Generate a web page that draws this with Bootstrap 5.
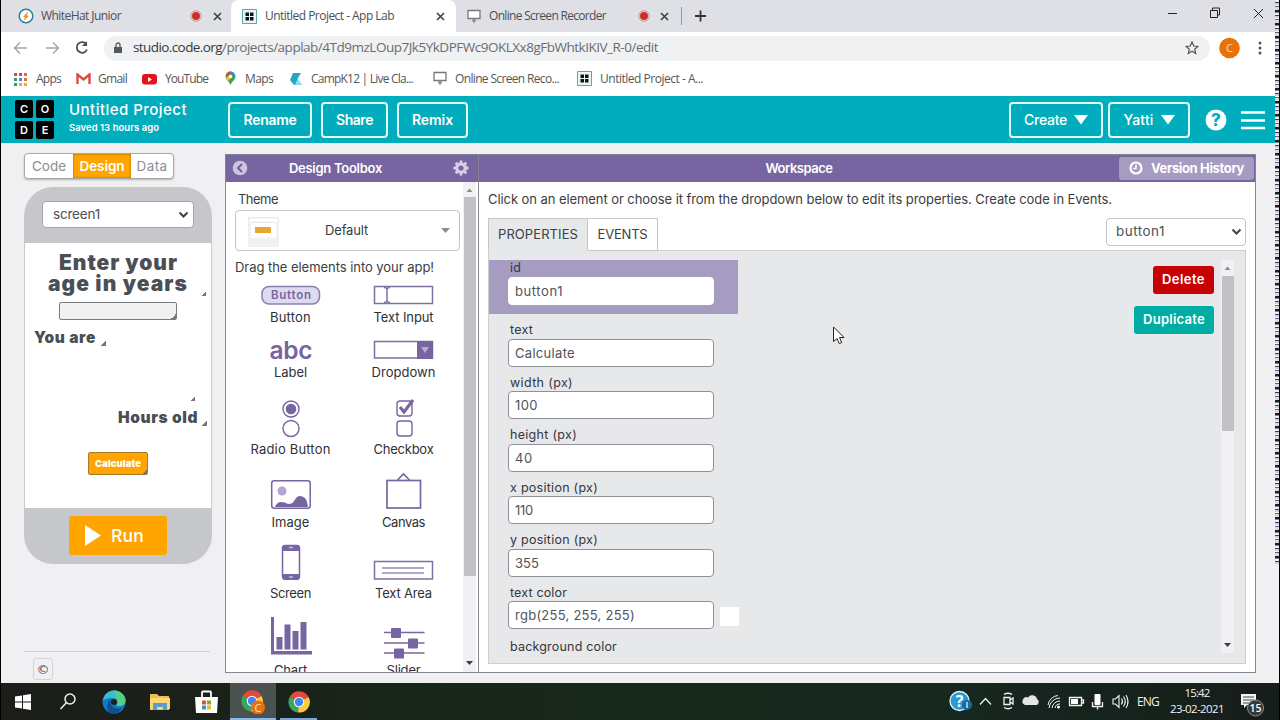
<!DOCTYPE html>
<html lang="en">
<head>
<meta charset="utf-8">
<meta name="viewport" content="width=device-width, initial-scale=1">
<title>Untitled Project - App Lab</title>
<link href="https://cdn.jsdelivr.net/npm/bootstrap@5.3.0/dist/css/bootstrap.min.css" rel="stylesheet">
<style>
:root{--teal:#00adbc;--purple:#7665a0;--lilac:#a69bc1;--orange:#ffa400}
html,body{height:100%}
body{width:1280px;height:720px;overflow:hidden;background:#000;font-family:"Open Sans","Noto Sans",sans-serif;font-size:12px;line-height:1;color:#444}
svg{display:block;flex:none}
[data-w]{display:inline-block;white-space:nowrap}
.screen-area{margin-left:1px;width:1278px;height:720px;background:#f0f0f2;position:relative}
/* browser */
.tabstrip{height:32px;background:#dee0e6;display:flex;align-items:center;color:#4c4f54}
.btab{height:32px;display:grid;align-items:center}
.tab-a{width:230px;grid-template-columns:17px 23px 148px 20px 1fr}
.tab-b{width:225px;background:#fff;border-radius:8px 8px 0 0;grid-template-columns:11px 23px 167px 1fr}
.tab-c{width:225px;grid-template-columns:11px 22px 145px 22px 1fr}
.addr{height:32px;background:#fff;display:grid;grid-template-columns:11px 31px 27px 34px 1106px 1fr;align-items:center}
.omni{height:25px;border-radius:13px;background:#f0f1f2;display:grid;grid-template-columns:9px 20px 1fr 25px;align-items:center;font-size:13.5px;color:#6a6d70}
.omni b{font-weight:400;color:#36383b}
.marks{height:32px;background:#fff;display:grid;grid-template-columns:12px 23px 40px 22px 44px 23px 59px 21px 45px 21px 122px 22px 122px 23px 1fr;align-items:center;padding-bottom:3px;color:#54575b}
/* code.org header */
.top{height:47px;background:var(--teal);color:#fff;font-family:Inter,sans-serif;padding-left:14px}
.logo{display:grid;grid-template-columns:18px 18px;gap:3px}
.logo span{height:18px;width:18px;background:#000;border-radius:2px;font-size:11px;font-weight:600;display:flex;align-items:center;justify-content:center}
.hbtn{height:36px;border:2px solid #e3fcff;border-radius:4px;color:#fff;font-size:14px;font-weight:600;display:flex;align-items:center;justify-content:center;gap:7px;padding:0}
.hbtn:hover{color:#fff}
/* app */
.app{height:540px;font-family:Inter,sans-serif}
.leftcol{width:224px;padding:10px 0 0 23px}
.modes{height:26px;width:150px;border:1px solid #aaa;border-radius:4px;background:#fff;box-shadow:0 1px 2px #0004;font-size:13.5px;color:#8a8d92;overflow:hidden}
.modes>div{display:flex;align-items:center;justify-content:center;height:24px;padding-top:1px}
.modes .on{background:var(--orange);color:#fff;font-weight:600;box-shadow:inset 0 0 2px #7a5200}
.phone{width:188px;height:377px;margin-top:8px;border-radius:29px;background:#c5c7ca;display:flex;flex-direction:column}
.phone-top{height:56px;padding:14px 0 0 18px}
.sel{background:#fff;border:1px solid #a4a6aa;border-radius:4px;display:flex;align-items:center;justify-content:space-between;color:#4d5158}
.canvas{height:265px;background:#fff;border:solid #c9cbcd;border-width:0 1px;position:relative;font-weight:900;color:#4a4f55}
.canvas>*{position:absolute}
.grip{width:5px;height:5px;background:linear-gradient(135deg,transparent 50%,#777 50%)}
.run{width:98px;height:39px;background:var(--orange);border-radius:3px;color:#fff;font-size:17.5px;font-weight:500;display:flex;align-items:center;gap:10px;padding-left:16px}
.frame{width:1031px;height:519px;border:1px solid #85858f;background:#fff;margin-top:11px;display:flex}
.bar{height:27px;background:var(--purple);color:#fff;font-weight:600;font-size:13px;display:flex;align-items:center;padding-bottom:1px}
.tools{width:253px;border-right:1px solid #85858f;overflow:hidden;height:517px}
.txt{font-size:13px;color:#3a3d42}
.theme{width:225px;height:41px;border:1px solid #c3c4c8;border-radius:4px;display:grid;grid-template-columns:12px 77px 1fr 18px;align-items:center}
.pal{display:grid;grid-template-columns:113px 113px;grid-template-rows:49px 55px 77px 73px 71px 78px;font-size:13px;color:#2f3136;margin-left:-1px}
.pal>div{display:flex;flex-direction:column;align-items:center}
.pal span{line-height:16px}
.sbar{width:13px;background:#f1f1f3;display:flex;flex-direction:column;align-items:center}
.work{flex:1}
.vh{width:135px;height:23px;background:var(--lilac);border-radius:3px;display:flex;align-items:center;padding-left:10px;gap:8px;font-weight:700}
.ptab{height:33px;border:1px solid #c6c7ca;display:flex;align-items:center;justify-content:center;font-size:13px;color:#3c3f44}
.panel{width:758px;height:414px;background:#e7e8ea;border:1px solid #cdced2;display:flex;padding-top:9px;margin-top:-1px}
.field{height:52.5px;padding-left:19px}
.field .lab{height:17.5px;line-height:17px;padding-left:2px;font-size:12.5px;color:#34373c}
.field .inp{height:28px;width:206px;border:1px solid #8f9197;border-radius:4px;background:#fff;padding:0 6px;line-height:26px;font-size:13px;color:#50545a}
.field.first{height:54px;width:249px;background:var(--lilac);padding-top:0;margin-bottom:7px}
.field.first .lab{height:16.5px;line-height:16px}
.field.first .inp{border-color:#fff}
.act{height:28px;border-radius:3px;color:#fff;font-size:13px;font-weight:600;display:flex;align-items:center;justify-content:center;padding:0}
/* taskbar */
.task{height:37px;background:linear-gradient(90deg,#1b1d19,#18281b 45%,#16281f 75%,#171d1a);color:#f2f2f2}
.cell{width:46px;height:37px;display:flex;align-items:center;justify-content:center;border-bottom:0 solid #86b9ea}
.noise{position:absolute;right:0;top:0;width:4px;height:564px;background:repeating-linear-gradient(0deg,#d9c9e0 0 2px,#34454e 2px 3px,#efefef 3px 5px,#6b8f7c 5px 6px,#21202b 6px 8px,#e7d5dd 8px 11px,#5a5f83 11px 12px,#f5fff6 12px 13px)}
.ptr{position:absolute;left:831px;top:326px}
</style>
</head>
<body>
<svg width="0" height="0" class="position-absolute"><defs>
<g id="rec"><circle cx="6" cy="6" r="5.3" fill="none" stroke="#e08a85" stroke-width="1"/><circle cx="6" cy="6" r="4" fill="#cc2f2c"/></g>
<path id="ex" d="M1 1l7 7M8 1l-7 7" stroke="#3c4043" stroke-width="1.6" fill="none"/>
<g id="mon"><path d="M1 1.500h12v8H1z" fill="#fff" stroke="#777" stroke-width="1.300"/><path d="M5 11.500h4M7 10v4" stroke="#888" stroke-width="1.300"/></g>
<g id="al"><path d="M.5.500h14v14H.5z" fill="#e8f7f5" stroke="#58a9a6"/><path d="M3.500 3.500h3.500v3.500H3.500zM8 3.500h3.500v3.500H8zM3.500 8h3.500v3.500H3.500zM8 8h3.500v3.500H8z" fill="#0b1414"/></g>
<g id="chr"><path d="M11 11L2 5.500A10.500 10.500 0 0 1 20.500 6z" fill="#e24a3b"/><path d="M11 11L2 5.500A10.500 10.500 0 0 0 10 21.500z" fill="#3ba55b"/><path d="M11 11L20.500 6A10.500 10.500 0 0 1 10 21.500z" fill="#fbcb3c"/><circle cx="11" cy="11" r="5.300" fill="#f5f5f5"/><circle cx="11" cy="11" r="4.200" fill="#4285f4"/></g>
<path id="chev" d="M1.500 1.500l4 4 4-4" fill="none" stroke="#3f4248" stroke-width="2"/>
</defs></svg>

<main class="screen-area">
  <div class="tabstrip">
    <div class="btab tab-a"><i></i>
      <svg width="16" height="16"><circle cx="8" cy="8" r="6.800" fill="#fff" stroke="#2b8095" stroke-width="1.500"/><path d="M10 3L5 9l2 .500L5.500 13 11 8l-2-.500z" fill="#e79a2d"/></svg>
      <span><span data-w="80">WhiteHat Junior</span></span>
      <svg width="12" height="12" style="margin-left:1px"><use href="#rec"/></svg><svg width="9" height="9" class="ms-1"><use href="#ex"/></svg></div>
    <div class="btab tab-b"><i></i><svg width="15" height="15"><use href="#al"/></svg><span><span data-w="129">Untitled Project - App Lab</span></span><svg width="9" height="9" class="ms-1"><use href="#ex"/></svg></div>
    <div class="btab tab-c"><i></i><svg width="14" height="15"><use href="#mon"/></svg><span><span data-w="117">Online Screen Recorder</span></span><svg width="12" height="12" class="ms-1"><use href="#rec"/></svg><span class="d-flex align-items-center"><svg width="9" height="9" class="ms-1"><use href="#ex"/></svg></span></div>
    <svg width="30" height="32"><path d="M-1 7v18" stroke="#999"/><path d="M19.500 10.500v11M14 16h11" stroke="#333" stroke-width="1.800"/><path d="M.5 7v18" stroke="#999"/></svg>
    <svg width="115" height="26" class="ms-auto align-self-start" fill="none" stroke="#222"><path d="M4 13.500h9"/><path d="M46.500 10.500h7v7h-7zM48.500 10v-2h7v7h-2"/><path d="M90 9l9 9M99 9l-9 9"/></svg>
  </div>
  <div class="addr"><i></i>
    <svg width="18" height="14" fill="none" stroke="#a4a6a9" stroke-width="1.400"><path d="M15 7H3M8 1.500L2.500 7 8 12.500"/></svg>
    <svg width="18" height="14" fill="none" stroke="#a4a6a9" stroke-width="1.400"><path d="M3 7h12M10 1.500L15.500 7 10 12.500"/></svg>
    <svg width="16" height="16" fill="none" stroke="#4a4d50" stroke-width="1.800" class="ms-1"><path d="M12.500 4.500A5.300 5.300 0 1 0 13 9.500"/><path d="M13 1v5H8z" fill="#4a4d50" stroke="none"/></svg>
    <div class="omni"><i></i>
      <svg width="10" height="12"><path d="M1 5h8v6H1z" fill="#55585b"/><path d="M3 5V3a2 2 0 0 1 4 0v2" fill="none" stroke="#55585b" stroke-width="1.300"/></svg>
      <span><b data-w="89">studio.code.org</b><span data-w="436">/projects/applab/4Td9mzLOup7Jk5YkDPFWc9OKLXx8gFbWhtkIKIV_R-0/edit</span></span>
      <svg width="14" height="14"><path d="M7 1l1.700 4 4.300.4-3.300 2.800 1 4.300L7 10.200l-3.700 2.300 1-4.300L1 5.400 5.300 5z" fill="none" stroke="#555" stroke-width="1.200"/></svg>
    </div>
    <span class="d-flex align-items-center"><svg width="46" height="22" style="margin-left:8px"><circle cx="11.500" cy="11" r="10.300" fill="#e8710a"/><text x="11.500" y="15" text-anchor="middle" fill="#ffd9b5" font-size="11">C</text><g fill="#555"><circle cx="42" cy="6" r="1.500"/><circle cx="42" cy="11" r="1.500"/><circle cx="42" cy="16" r="1.500"/></g></svg></span>
  </div>
  <div class="marks"><i></i>
    <svg width="14" height="14"><path d="M1 1h3v3H1zM6 1h3v3H6z" fill="#d9483b"/><path d="M11 1h3v3h-3zM11 6h3v3h-3z" fill="#d9703b"/><path d="M1 6h3v3H1zM1 11h3v3H1z" fill="#3a9a57"/><path d="M6 6h3v3H6z" fill="#4285f4"/><path d="M6 11h3v3H6zM11 11h3v3h-3z" fill="#e3b12b"/></svg><span><span data-w="25">Apps</span></span>
    <svg width="15" height="12"><path d="M1.500 11V1.500L7.500 6.500 13.500 1.500V11" fill="none" stroke="#dd4b3e" stroke-width="2.400"/></svg><span><span data-w="29">Gmail</span></span>
    <svg width="15" height="12"><rect y="1" width="15" height="10.500" rx="3" fill="#e5121b"/><path d="M6 4v5l4-2.500z" fill="#fff"/></svg><span><span data-w="43">YouTube</span></span>
    <svg width="13" height="15"><path d="M6.500 14.500C6 11 1.500 9 1.500 5.500a5 5 0 0 1 10 0c0 3.500-4.500 5.500-5 9z" fill="#36a45b"/><path d="M2 4A5 5 0 0 1 7 .500L4 7z" fill="#d9483b"/><path d="M7 .500A5 5 0 0 1 11 3.500L7 6z" fill="#4285f4"/><path d="M1.800 7L6 4l2 2-4 4.500z" fill="#f3bd34"/><circle cx="6.500" cy="5.500" r="1.800" fill="#fff"/></svg><span><span data-w="28">Maps</span></span>
    <svg width="12" height="14"><path d="M3 1h8L7.500 7l4.500 6H4L0 8z" fill="#2aa5c9"/><path d="M5 13L7.500 7l4.500 6z" fill="#95dcea"/></svg><span><span data-w="102">CampK12 | Live Cla...</span></span>
    <svg width="14" height="15"><use href="#mon"/></svg><span><span data-w="104">Online Screen Reco...</span></span>
    <svg width="15" height="15"><use href="#al"/></svg><span><span data-w="103">Untitled Project - A...</span></span>
  </div>

  <header class="top d-flex align-items-center">
    <div class="logo"><span>C</span><span>O</span><span>D</span><span>E</span></div>
    <div style="width:160px;padding-left:15px">
      <div style="font-size:15px;font-weight:500;margin-top:-4px"><span data-w="118">Untitled Project</span></div>
      <div style="font-size:9.500px;font-weight:600;margin-top:6px"><span data-w="90">Saved 13 hours ago</span></div>
    </div>
    <div class="d-flex" style="gap:9px;margin-left:14px">
      <a class="btn hbtn" style="width:84px"><span data-w="53">Rename</span></a>
      <a class="btn hbtn" style="width:67px"><span data-w="37">Share</span></a>
      <a class="btn hbtn" style="width:71px"><span data-w="41">Remix</span></a>
    </div>
    <div class="d-flex ms-auto align-items-center" style="padding-right:14px">
      <a class="btn hbtn" style="width:94px;font-weight:500"><span data-w="43">Create</span><svg width="14" height="10"><path d="M0 0h14L7 9.500z" fill="#fff"/></svg></a>
      <a class="btn hbtn" style="width:82px;margin-left:5px;font-weight:500"><span data-w="30">Yatti</span><svg width="14" height="10"><path d="M0 0h14L7 9.500z" fill="#fff"/></svg></a>
      <svg width="22" height="22" style="margin-left:15px"><circle cx="11" cy="11" r="10.500" fill="#fff"/><text x="11" y="17" text-anchor="middle" font-size="17" font-weight="800" fill="#00adbc">?</text></svg>
      <svg width="24" height="20" style="margin-left:14px"><path d="M0 2.500h24M0 10.500h24M0 18h24" stroke="#fff" stroke-width="2.400"/></svg>
    </div>
  </header>

  <div class="app d-flex">
    <section class="leftcol">
      <div class="modes d-flex"><div style="width:48px"><span data-w="34">Code</span></div><div class="on" style="width:58px"><span data-w="45">Design</span></div><div style="width:42px"><span data-w="31">Data</span></div></div>
      <div class="phone">
        <div class="phone-top"><div class="sel" style="width:152px;height:27px;padding:0 4px 0 10px;font-size:13.500px"><span data-w="47">screen1</span><svg width="11" height="8"><use href="#chev"/></svg></div></div>
        <div class="canvas">
          <span style="left:34px;top:9px;font-size:21px"><span data-w="119">Enter your</span></span>
          <span style="left:23px;top:30px;font-size:21px"><span data-w="140">age in years</span></span>
          <i class="grip" style="left:176px;top:48px"></i>
          <div style="left:34px;top:59px;width:118px;height:18px;border:1px solid #777b80;border-radius:2px;background:#f1f1f2"></div><i class="grip" style="left:146px;top:71px"></i>
          <span style="left:9px;top:87px;font-size:15.500px"><span data-w="62">You are</span></span>
          <i class="grip" style="left:76px;top:98px"></i><i class="grip" style="left:165px;top:153px"></i>
          <span style="left:93px;top:167px;font-size:15.500px"><span data-w="80">Hours old</span></span>
          <i class="grip" style="left:177px;top:178px"></i>
          <div class="d-flex align-items-center justify-content-center text-white" style="left:63px;top:209px;width:60px;height:23px;background:var(--orange);border:1px solid #a87a28;border-radius:2px;font-size:9.500px"><span data-w="46">Calculate</span></div><i class="grip" style="left:117px;top:226px"></i>
        </div>
        <div style="padding:8px 0 0 45px"><div class="run"><svg width="16" height="21"><path d="M0 0l16 10.500L0 21z" fill="#fff"/></svg><span data-w="33">Run</span></div></div>
      </div>
      <div style="width:186px;border-top:1px solid #d0d0d3;margin-top:87px;padding:6px 0 0 9px"><div class="d-flex align-items-center justify-content-center" style="width:20px;height:22px;border:1px solid #d3d3d8;border-radius:3px;font:13px 'DejaVu Sans',sans-serif;color:#444">©</div></div>
    </section>

    <section class="frame">
      <div class="tools">
        <div class="bar" style="padding-left:6px"><svg width="16" height="16"><circle cx="8" cy="8" r="7.300" fill="#cdc5df"/><path d="M10 4L6 8l4 4" fill="none" stroke="#7665a0" stroke-width="2.200"/></svg>
          <span style="margin-left:41px;width:164px"><span data-w="93">Design Toolbox</span></span>
          <svg width="16" height="16" viewBox="-8 -8 16 16"><circle r="4.200" fill="none" stroke="#d7d0e6" stroke-width="3.200"/><path d="M0-7.500V-5M0 7.500V5M-7.500 0H-5M7.500 0H5M-5.300-5.300l2 2M5.300 5.300l-2-2M-5.300 5.300l2-2M5.300-5.300l-2 2" stroke="#d7d0e6" stroke-width="2.800"/></svg></div>
        <div class="d-flex">
          <div style="width:236px;padding-left:9px">
            <div class="txt" style="padding:11px 0 0 3px;height:28px"><span data-w="40">Theme</span></div>
            <div class="theme"><i></i>
              <svg width="32" height="32"><path d="M0 2h31v30H0z" fill="#f1f1f3"/><path d="M1 3h29v6l-5-2H4l-3 3z" fill="#fff" stroke="#ddd" stroke-width=".6"/><path d="M3 8h25v15H3z" fill="#fff"/><path d="M7 12h16v6H7z" fill="#eba52c"/></svg>
              <span class="txt"><span data-w="43">Default</span></span>
              <svg width="9" height="5"><path d="M0 0h9L4.500 5z" fill="#8a8a8d"/></svg></div>
            <div class="txt" style="height:25px;padding-top:10px"><span data-w="199">Drag the elements into your app!</span></div>
            <div class="pal">
              <div><svg width="72" height="33"><rect x="7" y="10.500" width="57.500" height="17.500" rx="7" fill="#dedaf0" stroke="#8b7fb0" stroke-width="1.500"/><text x="36" y="23" text-anchor="middle" font-size="11.500" font-weight="600" fill="#7665a0" textLength="40">Button</text></svg><span data-w="41">Button</span></div>
              <div><svg width="72" height="33"><g fill="none" stroke="#7d72a2" stroke-width="1.500"><rect x="6.500" y="10.500" width="58" height="17"/><path d="M16 11.500q3 0 3 2v11q0 2-3 2M22 11.500q-3 0-3 2v11q0 2 3 2"/></g></svg><span data-w="60">Text Input</span></div>
              <div><svg width="72" height="39"><text x="36" y="33.500" text-anchor="middle" font-size="24.500" font-weight="600" fill="#7665a0" textLength="43">abc</text></svg><span data-w="33">Label</span></div>
              <div><svg width="72" height="39"><rect x="6.500" y="16.500" width="58" height="16.500" fill="#fff" stroke="#7d72a2" stroke-width="1.500"/><path d="M49 16h16v18H49z" fill="#7665a0"/><path d="M53 22h8l-4 6z" fill="#b7aed3"/></svg><span data-w="64">Dropdown</span></div>
              <div><svg width="72" height="61" fill="#fff" stroke="#7665a0" stroke-width="1.400"><circle cx="36" cy="29" r="8"/><circle cx="36" cy="29" r="4.600" fill="#7665a0"/><circle cx="36" cy="48.500" r="8"/></svg><span data-w="80">Radio Button</span></div>
              <div><svg width="72" height="61" fill="#fff" stroke="#7665a0" stroke-width="1.400"><rect x="29" y="21" width="15" height="15" rx="3"/><path d="M32 27l4 5 9-12" fill="none" stroke-width="3"/><rect x="29" y="41" width="15" height="15" rx="3"/></svg><span data-w="60">Checkbox</span></div>
              <div><svg width="72" height="57"><rect x="16.700" y="23.700" width="38.500" height="27.500" rx="2.500" fill="#fff" stroke="#7665a0" stroke-width="1.500"/><circle cx="27" cy="34" r="4.500" fill="#b0a6d0"/><path d="M20 50q2-5 6-5t7 2q5 0 6-3 3-5 6-5 7 0 8 11z" fill="#7665a0"/></svg><span data-w="38">Image</span></div>
              <div><svg width="72" height="57" fill="none" stroke="#7665a0" stroke-width="1.700"><rect x="19" y="23.500" width="33.500" height="27.500"/><path d="M29.500 23l6-6 6 6"/></svg><span data-w="43">Canvas</span></div>
              <div><svg width="72" height="55"><rect x="27.500" y="15.500" width="17" height="33.500" rx="3" fill="#fff" stroke="#7665a0" stroke-width="1.500"/><path d="M27 19q0-4 3-4h12q3 0 3 4v2H27zM27 44h18v2q0 4-3 4H30q-3 0-3-4z" fill="#7665a0"/><path d="M34 17.500h4M34 47h4" stroke="#c5bde0" stroke-width="1.500"/></svg><span data-w="41">Screen</span></div>
              <div><svg width="72" height="55" fill="none"><rect x="6.500" y="31.500" width="58" height="17.500" stroke="#7d72a2" stroke-width="1.500"/><path d="M14 38h42M14 43h42" stroke="#988dbb" stroke-width="1.500"/></svg><span data-w="57">Text Area</span></div>
              <div><svg width="72" height="61"><g fill="#7665a0"><path d="M16 16h3v34h38v3.500H16z"/><path d="M21.500 36h6v12.500h-6zM29.500 23.500h6v25h-6zM37.500 30h6v18.500h-6zM45.500 21h6v27.500h-6z"/></g></svg><span data-w="33">Chart</span></div>
              <div><svg width="72" height="61"><path d="M16 31.500h40.500M16 42h40.500M16 52h40.500" stroke="#7665a0" stroke-width="1.600"/><g fill="#7665a0"><rect x="23" y="27" width="10" height="10" rx="1"/><rect x="40" y="37.500" width="10" height="10" rx="1"/><rect x="26" y="47.500" width="10" height="10" rx="1"/></g></svg><span data-w="34">Slider</span></div>
            </div>
          </div>
          <div class="sbar" style="height:490px;margin-left:1px"><svg width="13" height="15"><path d="M3.500 10h6l-3-3.500z" fill="#8c8c8f"/></svg><div style="width:12px;height:379px;background:#c1c1c3"></div><svg width="13" height="14" class="mt-auto" style="margin-bottom:2px"><path d="M3 5h7L6.500 9z" fill="#3e3e42"/></svg></div>
        </div>
      </div>
      <div class="work">
        <div class="bar"><span class="text-center" style="width:640px"><span data-w="67">Workspace</span></span><div class="vh"><svg width="14" height="14"><circle cx="7" cy="7" r="5.500" fill="none" stroke="#fff" stroke-width="2.200"/><path d="M7 3.500V7.500H4" fill="none" stroke="#fff" stroke-width="1.500"/></svg><span data-w="93">Version History</span></div></div>
        <div style="padding-left:9px">
          <div class="txt" style="height:36px;padding-top:11px"><span data-w="624">Click on an element or choose it from the dropdown below to edit its properties. Create code in Events.</span></div>
          <div class="d-flex" style="width:758px">
            <div class="ptab position-relative" style="width:100px;background:#e7e8ea;border-bottom-color:#e7e8ea"><span data-w="80">PROPERTIES</span></div>
            <div class="ptab border-start-0" style="width:70px"><span data-w="50">EVENTS</span></div>
            <div class="sel ms-auto" style="width:140px;height:28px;border-color:#c4c5ca;padding:0 3px 0 9px;font-size:13.500px"><span data-w="49">button1</span><svg width="11" height="8"><use href="#chev"/></svg></div>
          </div>
          <div class="panel">
            <div style="width:640px;height:400px;overflow:hidden">
              <div class="field first"><div class="lab"><span data-w="11">id</span></div><div class="inp"><span data-w="48">button1</span></div></div>
              <div class="field"><div class="lab"><span data-w="23">text</span></div><div class="inp"><span data-w="60">Calculate</span></div></div>
              <div class="field"><div class="lab"><span data-w="63">width (px)</span></div><div class="inp"><span data-w="23">100</span></div></div>
              <div class="field"><div class="lab"><span data-w="67">height (px)</span></div><div class="inp"><span data-w="18">40</span></div></div>
              <div class="field"><div class="lab"><span data-w="88">x position (px)</span></div><div class="inp"><span data-w="18">110</span></div></div>
              <div class="field"><div class="lab"><span data-w="88">y position (px)</span></div><div class="inp"><span data-w="24">355</span></div></div>
              <div class="field"><div class="lab"><span data-w="57">text color</span></div><div class="d-flex align-items-center" style="gap:6px"><div class="inp"><span data-w="120">rgb(255, 255, 255)</span></div><div class="bg-white" style="width:19px;height:19px;margin-top:3px"></div></div></div>
              <div class="field"><div class="lab" style="padding-top:2px"><span data-w="107">background color</span></div></div>
            </div>
            <div class="d-flex flex-column align-items-end" style="width:85px;padding-top:6px;gap:12px"><div class="btn act" style="width:61px;background:#c80004"><span data-w="43">Delete</span></div><div class="btn act" style="width:80px;background:#00ada4"><span data-w="62">Duplicate</span></div></div>
            <div class="sbar" style="margin-left:7px;height:393px"><svg width="13" height="16"><path d="M3.500 10h6l-3-3.500z" fill="#8c8c8f"/></svg><div style="width:12px;height:155px;background:#c1c1c3"></div><svg width="13" height="14" class="mt-auto"><path d="M3 4h7L6.500 8z" fill="#3e3e42"/></svg></div>
          </div>
        </div>
      </div>
    </section>
  </div>

  <footer class="task d-flex">
    <div class="cell" style="width:44px"><svg width="16" height="16"><path d="M0 2.500l7-1v6H0zM8 1.300L16 0v7.500H8zM0 8.500h7v6l-7-1zM8 8.500h8V16l-8-1.300z" fill="#fff"/></svg></div>
    <div class="cell"><svg width="16" height="17" fill="none" stroke="#eee" stroke-width="1.500"><circle cx="10" cy="6" r="5"/><path d="M6.500 9.500L.5 16"/></svg></div>
    <div class="cell"><svg width="24" height="24"><circle cx="12" cy="12" r="11.500" fill="#1479c9"/><path d="M1 11C2 3 8 .500 12 .500 19 .500 24 6 23.500 11c-.5 5-7 6-9 4 2-2 1-7-4-7C6 8 2 9 1 11z" fill="#39bdcf"/><path d="M12 .500C19 .500 24 6 23.500 11c-.5 5-7 6-9 4 2-2 2-4 0-6z" fill="#55cf83"/><path d="M9 9c-2 5 1 11 11 9-3 5-8 6-12 5C4 20 4 12 9 9z" fill="#0d4f91"/><circle cx="12" cy="12" r="3" fill="#18241a"/></svg></div>
    <div class="cell"><svg width="22" height="19"><path d="M1 2h7l2 2h10v14H1z" fill="#efbd4d"/><path d="M1 6h20v11H1z" fill="#fbd775"/><path d="M4 18v-7h14v7h-4v-3H8v3z" fill="#5b9bc9"/></svg></div>
    <div class="cell"><svg width="23" height="24"><path d="M7 8V2.500q0-1 1-1h7q1 0 1 1V8" fill="none" stroke="#fff" stroke-width="1.800"/><path d="M0 7h23l-1 16H1z" fill="#fff"/><path d="M7 10.500h4v4H7z" fill="#dd5237"/><path d="M12 10.500h4v4h-4z" fill="#77ae38"/><path d="M7 15.500h4v4H7z" fill="#3498cf"/><path d="M12 15.500h4v4h-4z" fill="#f0b52e"/></svg></div>
    <div class="cell position-relative" style="background:#4b514e;margin-left:1px"><svg width="24" height="24"><use href="#chr"/><circle cx="17" cy="17.500" r="7" fill="#e8710a"/><text x="17" y="21.500" text-anchor="middle" font-size="11" fill="#ffe2c6">C</text></svg><i class="position-absolute bottom-0 start-0 w-100" style="height:2px;background:#86b9ea"></i></div>
    <div class="cell position-relative"><svg width="22" height="22"><use href="#chr"/></svg><i class="position-absolute bottom-0" style="left:4px;width:37px;height:2px;background:#79a9d4"></i></div>
    <svg class="ms-auto" width="190" height="37" viewBox="945 0 190 37" fill="none" stroke="#f2f2f2" stroke-width="1.300">
      <circle cx="958.500" cy="18" r="9.500" fill="#269bd4" stroke="#dff2fb"/><circle cx="966" cy="22" r="5" fill="#176b9e" stroke="none"/><text x="958.500" y="24" text-anchor="middle" font-size="16" font-weight="700" fill="#fff" stroke="none">?</text><path d="M966 19v6"/>
      <path d="M979 21.500l5.500-6 5.500 6"/>
      <path d="M1003 14.500h6v7h-6zM1009 17l3-2v6l-3-2M1003 11.500q4-2.500 8 0M1003 24.500q4 2.500 8 0"/>
      <path d="M1024 22h12a3.500 3.500 0 0 0 0-6 5 5 0 0 0-9-1.500 4 4 0 0 0-3 7.500z" fill="#e4e6e6" stroke="none"/>
      <path d="M1048 25a11 11 0 0 1 11-10M1051 25a8 8 0 0 1 8-7M1054 25a5 5 0 0 1 5-4M1047 22a11 11 0 0 1 10-9.500" stroke-width="1"/><circle cx="1057.500" cy="24" r="1.500" fill="#fff" stroke="none"/>
      <path d="M1068.500 14.500h12v8h-12zM1081 17h1.500v3h-1.500"/><path d="M1070 16h7v5h-7z" fill="#fff" stroke="none"/>
      <rect x="1093.500" y="11" width="6" height="11" rx="1" fill="#fff" stroke="none"/><path d="M1091.500 19v4.500h10V19M1096.500 24v2.500"/>
      <path d="M1112 16v5h2.500l3.500 3.500v-12l-3.500 3.500zM1120.500 15.500q2 3 0 6M1122.500 13.500q3.500 5 0 10M1125 12q4 6.500 0 13" stroke-width="1.100"/>
    </svg>
    <div class="d-flex align-items-center" style="width:34px"><span data-w="22" style="margin-left:1px">ENG</span></div>
    <div class="text-center" style="width:54px;padding-top:2px;font-size:11.500px;line-height:16px"><div><span data-w="25">15:42</span></div><div><span data-w="54">23-02-2021</span></div></div>
    <svg width="55" height="37"><path d="M17 11h15v11h-9l-3 3v-3h-3z" fill="#f3f3f3"/><path d="M19 14h11M19 17h11M19 20h6" stroke="#444"/><circle cx="31.500" cy="25" r="8" fill="#343a37" stroke="#8c918e"/><text x="31.500" y="29" text-anchor="middle" font-size="10.500" font-weight="600" fill="#fff">15</text></svg>
  </footer>
  <div class="noise"></div>
  <svg class="ptr" width="14" height="20"><path d="M1.500 1v14.500l3.500-3 2.200 5 2.500-1-2.200-5h4.500z" fill="#fff" stroke="#222" stroke-width="1"/></svg>
</main>
<script src="https://cdn.jsdelivr.net/npm/bootstrap@5.3.0/dist/js/bootstrap.bundle.min.js"></script>
<script>
// Track each label out (or in) to its set width.
document.querySelectorAll('[data-w]').forEach(el => {
  const n = el.textContent.length, w = el.getBoundingClientRect().width;
  const ls = (el.dataset.w - w) / n;
  el.style.letterSpacing = ls.toFixed(3) + 'px';
});
</script>
</body>
</html>
